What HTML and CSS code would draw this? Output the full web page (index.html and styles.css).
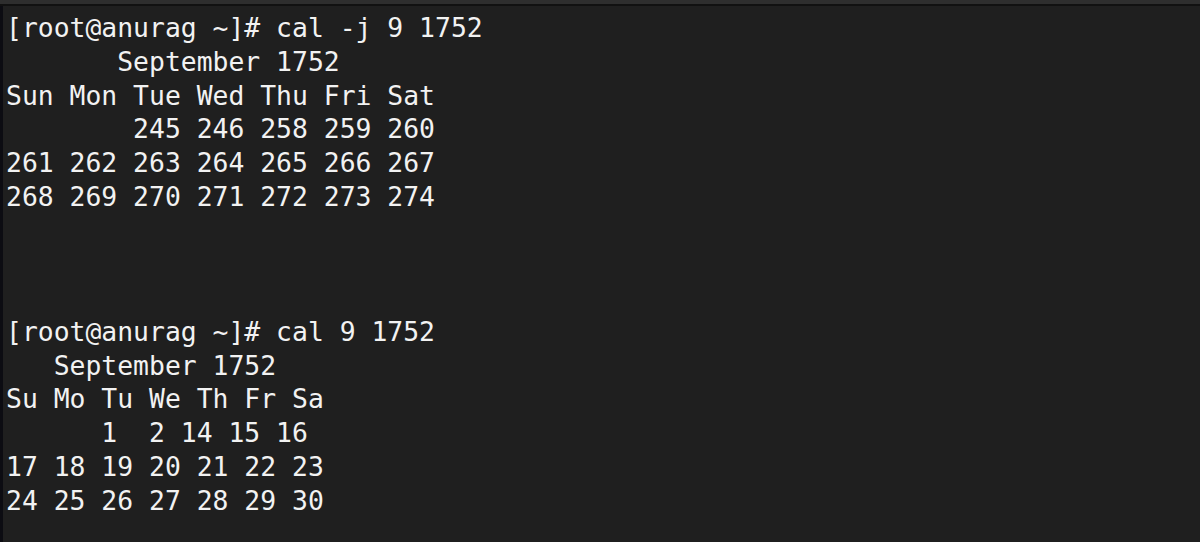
FILE: index.html
```html
<!DOCTYPE html>
<html>
<head>
<meta charset="utf-8">
<link rel="stylesheet" href="styles.css">
</head>
<body>
<div class="window">
  <div class="topbar"></div>
  <div class="body">
    <div class="edge"></div>
<pre class="term">[root@anurag ~]# cal -j 9 1752
       September 1752
Sun Mon Tue Wed Thu Fri Sat
        245 246 258 259 260
261 262 263 264 265 266 267
268 269 270 271 272 273 274



[root@anurag ~]# cal 9 1752
   September 1752
Su Mo Tu We Th Fr Sa
      1  2 14 15 16
17 18 19 20 21 22 23
24 25 26 27 28 29 30
</pre>
  </div>
</div>
</body>
</html>
```
FILE: styles.css
```css
html, body {
  margin: 0;
  padding: 0;
  background: #1f1f1f;
}
.window {
  width: 1200px;
  height: 542px;
  display: flex;
  flex-direction: column;
  overflow: hidden;
  background: #1f1f1f;
}
.topbar {
  height: 4px;
  background: #2e2e2e;
  border-bottom: 2px solid #111111;
  flex: none;
}
.body {
  flex: 1;
  display: flex;
}
.edge {
  width: 3px;
  background: #0c0c12;
  flex: none;
}
.term {
  margin: 0;
  padding: 5px 0 0 3px;
  font-family: "DejaVu Sans Mono", "Liberation Mono", monospace;
  font-size: 26.4px;
  line-height: 33.75px;
  color: #f2f2f2;
  white-space: pre;
}
```
